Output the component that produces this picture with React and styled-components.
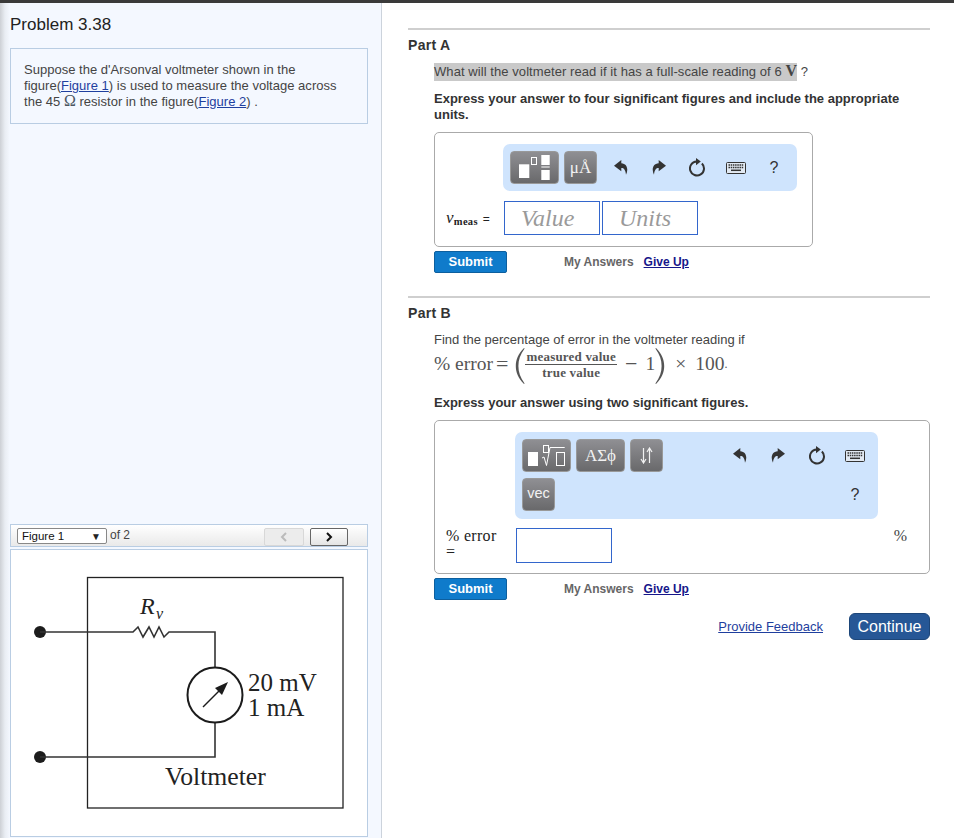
import styled, { createGlobalStyle } from "styled-components";

const GlobalStyle = createGlobalStyle`
  html, body { margin: 0; padding: 0; background: #fff; }
  body { font-family: "Liberation Sans", Arial, sans-serif; color: #333; }
  * { box-sizing: border-box; }
`;

const serif = `"Liberation Serif", "Times New Roman", serif`;

const Page = styled.div`
  width: 954px;
  height: 838px;
  overflow: hidden;
  display: flex;
  border-top: 3px solid #3a3a3a;
`;

const LeftPane = styled.aside`
  width: 382px;
  flex: none;
  padding: 0 13px 0 10px;
  border-right: 1px solid #ccd3dc;
  background: linear-gradient(to right, #cdd0d5 0, #e9edf3 5px, #f4f8ff 10px);
`;

const Title = styled.h1`
  margin: 0;
  padding-top: 12px;
  font-size: 17px;
  line-height: 20px;
  font-weight: normal;
  color: #222;
`;

const ProblemBox = styled.div`
  margin-top: 13px;
  height: 76px;
  padding: 13px 13px 0;
  border: 1px solid #b9cde3;
  font-size: 13px;
  line-height: 16px;
  letter-spacing: 0.02px;
  color: #444;
`;

const Link = styled.a`
  color: ${(p) => (p.$dark ? "#16168a" : "#1f3f9e")};
  text-decoration: underline;
  font-weight: ${(p) => (p.$bold ? "bold" : "normal")};
`;

const Omega = styled.span`
  font-family: ${serif};
  font-size: 16px;
  line-height: 0;
  color: #4a5560;
`;

const FigureBar = styled.div`
  margin-top: 400px;
  height: 23px;
  padding: 3px 19px 0 6px;
  display: flex;
  align-items: flex-start;
  border: 1px solid #b9cde3;
  background: linear-gradient(to bottom, #ffffff, #e9e9e9);
  font-size: 12px;
  color: #444;
`;

const FigureSelect = styled.div`
  width: 90px;
  height: 16px;
  padding: 0 5px 0 4px;
  display: flex;
  justify-content: space-between;
  align-items: center;
  border: 1px solid #888;
  border-radius: 2px;
  background: #fff;
  font-size: 11.5px;
  color: #111;
`;

const Caret = styled.span`
  font-size: 10px;
  color: #222;
`;

const OfLabel = styled.span`
  margin-left: 3px;
  line-height: 15px;
  flex: 1;
`;

const NavButton = styled.button`
  width: ${(p) => (p.$off ? "40px" : "38px")};
  height: 18px;
  margin-left: ${(p) => (p.$off ? "0" : "6px")};
  padding: 0;
  display: flex;
  align-items: center;
  justify-content: center;
  border: 1px solid ${(p) => (p.$off ? "#d8d8d8" : "#666")};
  border-radius: 2px;
  background: ${(p) => (p.$off ? "#ececec" : "linear-gradient(to bottom, #ffffff, #e4e4e4)")};
`;

const FigurePanel = styled.div`
  margin-top: 2px;
  height: 288px;
  border: 1px solid #b9cde3;
  background: #fff;
`;

const Circuit = styled.svg`
  display: block;
  width: 356px;
  height: 286px;
`;

const RightPane = styled.main`
  flex: 1;
  padding: 25px 24px 0 26px;
`;

const PartHeader = styled.h2`
  margin: 0;
  padding-top: 7px;
  border-top: 2px solid #cfcfcf;
  font-size: 14px;
  line-height: 16px;
  letter-spacing: 0.3px;
  font-weight: bold;
  color: #333;
`;

const PartBody = styled.section`
  margin-left: 26px;
  margin-bottom: ${(p) => p.$gap || 0}px;
`;

const Question = styled.p`
  margin: 10px 0 0;
  font-size: 13px;
  line-height: 18px;
  letter-spacing: 0.07px;
  color: #444;
`;

const Highlight = styled.span`
  display: inline-block;
  background: #c9c9c9;
`;

const BoldUnit = styled.span`
  font-family: ${serif};
  font-size: 16px;
  font-weight: bold;
  line-height: 14px;
`;

const Instruction = styled.p`
  margin: ${(p) => p.$top}px 0 0;
  font-size: 13px;
  line-height: 16px;
  font-weight: bold;
  color: #333;
`;

const AnswerBox = styled.div`
  width: ${(p) => p.$width}px;
  height: ${(p) => p.$height}px;
  margin-top: 9px;
  padding: 11px ${(p) => p.$padRight}px 0 11px;
  border: 1px solid #aaa;
  border-radius: 5px;
  background: #fff;
`;

const Toolbar = styled.div`
  width: ${(p) => p.$width}px;
  height: ${(p) => p.$height}px;
  margin-left: ${(p) => p.$indent}px;
  padding: 7px 4px 0 7px;
  display: flex;
  flex-direction: column;
  gap: 6px;
  border-radius: 7px;
  background: #cfe4fd;
`;

const ToolRow = styled.div`
  display: flex;
  justify-content: space-between;
  height: 33px;
`;

const ToolGroup = styled.div`
  display: flex;
  gap: 5px;
`;

const IconGroup = styled.div`
  display: flex;
`;

const ToolButton = styled.div`
  width: ${(p) => p.$width}px;
  height: 33px;
  padding-bottom: ${(p) => (p.$sans ? "3px" : "0")};
  display: flex;
  align-items: center;
  justify-content: center;
  border: 1px solid #999;
  border-radius: 4px;
  background: linear-gradient(to bottom, #8f8f93, #69696b);
  color: #f2f2f2;
  font-family: ${(p) => (p.$sans ? `"Liberation Sans", sans-serif` : serif)};
  font-size: ${(p) => p.$size || 17}px;
`;

const IconCell = styled.div`
  width: 38.3px;
  height: 33px;
  display: flex;
  align-items: center;
  justify-content: center;
  color: #333;
  font-size: 16px;
`;

const InputRow = styled.div`
  margin-top: ${(p) => p.$top}px;
  display: flex;
  align-items: flex-start;
`;

const VarLabel = styled.div`
  width: ${(p) => p.$width}px;
  padding-top: ${(p) => p.$top}px;
  font-family: ${serif};
  font-size: ${(p) => p.$size}px;
  line-height: 16px;
  letter-spacing: 0.3px;
  color: #222;
  flex: none;
`;

const Sub = styled.sub`
  font-size: 10.5px;
  font-style: normal;
  font-weight: bold;
  line-height: 0;
  vertical-align: -2px;
`;

const Equals = styled.span`
  margin-left: 5px;
  font-family: "Liberation Sans", sans-serif;
  font-size: 12px;
`;

const AnswerInput = styled.input`
  width: 96px;
  height: ${(p) => p.$height}px;
  margin-right: 2px;
  padding: 0 0 0 16px;
  border: 1px solid #3366cc;
  border-radius: 0;
  outline: none;
  background: #fff;
  font-family: ${serif};
  font-size: 24px;
  font-style: italic;
  &::placeholder {
    color: #9a9a9a;
    opacity: 1;
  }
`;

const UnitMark = styled.span`
  margin-left: auto;
  font-family: ${serif};
  font-size: 16px;
  line-height: 16px;
  color: #444;
`;

const ActionRow = styled.div`
  margin-top: 4px;
  display: flex;
  align-items: center;
  font-size: 12px;
  font-weight: bold;
`;

const SubmitButton = styled.button`
  width: 73px;
  height: 22px;
  padding: 0 0 2px;
  border: 1px solid #0d5f9e;
  border-radius: 2px;
  background: #0f7bcb;
  color: #fff;
  font-family: inherit;
  font-size: 13px;
  font-weight: bold;
`;

const MyAnswers = styled.span`
  margin-left: 57px;
  margin-right: 10px;
  color: #666;
`;

const Paragraph = styled.p`
  margin: 11px 0 0;
  font-size: 13px;
  line-height: 16px;
  color: #444;
`;

const Formula = styled.div`
  height: 32px;
  display: flex;
  align-items: center;
  font-family: ${serif};
  font-size: 19.5px;
  color: #555;
`;

const Delimiter = styled.svg`
  flex: none;
  align-self: flex-start;
  width: 10px;
  height: 36px;
  margin: ${(p) => p.$margin};
  transform: ${(p) => (p.$closing ? "scaleX(-1)" : "none")};
`;

const Fraction = styled.span`
  display: inline-flex;
  flex-direction: column;
  align-items: center;
  font-size: 13px;
  font-weight: bold;
  line-height: 15px;
  letter-spacing: 0.2px;
`;

const Numerator = styled.span`
  padding: 0 1px;
  border-bottom: 1px solid #555;
`;

const FormulaPart = styled.span`
  margin: ${(p) => p.$margin};
  font-size: ${(p) => (p.$size ? `${p.$size}px` : "inherit")};
`;

const FooterRow = styled.div`
  margin-top: 13px;
  display: flex;
  justify-content: flex-end;
  align-items: center;
`;

const FeedbackLink = styled(Link)`
  margin-right: 26px;
  font-size: 13px;
`;

const ContinueButton = styled.button`
  width: 81px;
  height: 27px;
  padding: 0;
  border: 1px solid #1d4679;
  border-radius: 6px;
  background: #265796;
  color: #fff;
  font-family: inherit;
  font-size: 16px;
`;

function UndoIcon({ flip }) {
  return (
    <svg width="14" height="15" viewBox="0 0 14 15" style={flip ? { transform: "scaleX(-1)" } : undefined}>
      <path d="M7.3 0 0 5.7l7.3 5.6V8c2.2-.2 4.2 1.5 4.7 6.7C14.5 10 13.5 3.5 7.3 3.2z" fill="#333" />
    </svg>
  );
}

function ResetIcon() {
  return (
    <svg width="16" height="19" viewBox="0 0 16 19">
      <path d="M12.9 5.5A7 7 0 1 1 7.5 3.5" fill="none" stroke="#333" strokeWidth="2" />
      <path d="M7 0v7.2L11.8 3.5z" fill="#333" />
    </svg>
  );
}

function KeyboardIcon() {
  return (
    <svg width="20" height="12" viewBox="0 0 20 12">
      <rect x=".5" y=".5" width="19" height="11" rx="1" fill="#e2e9f2" stroke="#333" />
      <path d="M2.5 3h15M2.5 5.5h15" stroke="#333" strokeWidth="1.3" strokeDasharray="1.5 .7" />
      <path d="M5 8.3h10" stroke="#333" strokeWidth="1.5" />
    </svg>
  );
}

function TemplateIcon() {
  return (
    <svg width="31" height="25" viewBox="0 0 31 25" fill="#fff">
      <rect x="0" y="9.3" width="10.3" height="13.7" />
      <rect x="12.5" y="2.5" width="5" height="7" fill="none" stroke="#fff" />
      <rect x="22.3" y="0" width="8.4" height="10" />
      <rect x="22.3" y="11.5" width="8.4" height="1" />
      <rect x="22.3" y="15" width="8.4" height="10" />
    </svg>
  );
}

function RadicalIcon() {
  return (
    <svg width="37" height="21" viewBox="0 0 37 21" fill="none" stroke="#fff">
      <rect x="0" y="7" width="10" height="14" fill="#fff" stroke="none" />
      <rect x="15.5" y=".5" width="5" height="7" />
      <path d="M14 13l2-1 2.5 8.5L22 2.5h14.7" />
      <rect x="28.5" y="7.5" width="8" height="13" />
    </svg>
  );
}

function SwapIcon() {
  return (
    <svg width="13" height="17" viewBox="0 0 13 17" fill="none" stroke="#f2f2f2" strokeWidth="1.2">
      <path d="M3.5 1v14M1 12l2.5 4L6 12" />
      <path d="M9.5 16V2M7 5l2.5-4L12 5" />
    </svg>
  );
}

function ChevronIcon({ left, color }) {
  return (
    <svg width="8" height="10" viewBox="0 0 8 10">
      <path d={left ? "M6 1 2 5l4 4" : "M2 1l4 4-4 4"} fill="none" stroke={color} strokeWidth="2" />
    </svg>
  );
}

function Paren({ closing, margin }) {
  return (
    <Delimiter viewBox="0 0 10 36" $closing={closing} $margin={margin}>
      <path d="M9 0C3 6 .8 12 .8 18S3 30 9 36l.6-.5C5.200 29.500 3.400 24 3.400 18S5.200 6.500 9.600.5z" fill="#555" />
    </Delimiter>
  );
}

function HistoryTools() {
  return (
    <>
      <IconCell><UndoIcon /></IconCell>
      <IconCell><UndoIcon flip /></IconCell>
      <IconCell><ResetIcon /></IconCell>
      <IconCell><KeyboardIcon /></IconCell>
    </>
  );
}

function Actions() {
  return (
    <ActionRow>
      <SubmitButton>Submit</SubmitButton>
      <MyAnswers>My Answers</MyAnswers>
      <Link $dark $bold>Give Up</Link>
    </ActionRow>
  );
}

function CircuitFigure() {
  return (
    <Circuit viewBox="11 550 356 286">
      <rect x="87.5" y="577.5" width="255.5" height="230.5" fill="none" stroke="#222" strokeWidth="1.3" />
      <circle cx="40" cy="632" r="6" fill="#1c1c1c" />
      <circle cx="40" cy="757" r="6" fill="#1c1c1c" />
      <path
        d="M40 632H133l5-5 5 10 6-10 5 10 5-10 5 10 5-5H215V667M215 723V757H40"
        fill="none"
        stroke="#333"
        strokeWidth="1.6"
      />
      <circle cx="215" cy="695" r="27.5" fill="none" stroke="#1c1c1c" strokeWidth="2" />
      <path d="M203 707 222 688" stroke="#1c1c1c" strokeWidth="1.4" />
      <path d="M228 682 222 695 215 688z" fill="#1c1c1c" />
      <g fontFamily={serif} fill="#222" fontSize="25">
        <text x="140" y="614" fontStyle="italic" fontSize="24">R</text>
        <text x="156" y="619" fontStyle="italic" fontSize="16">v</text>
        <text x="248" y="691">20 mV</text>
        <text x="248" y="716">1 mA</text>
        <text x="165" y="785" fontSize="25.7">Voltmeter</text>
      </g>
    </Circuit>
  );
}

export default function App() {
  return (
    <>
      <GlobalStyle />
      <Page>
        <LeftPane>
          <Title>Problem 3.38</Title>
          <ProblemBox>
            Suppose the d'Arsonval voltmeter shown in the
            <br />
            figure(<Link>Figure 1</Link>) is used to measure the voltage across
            <br />
            the 45 <Omega>Ω</Omega> resistor in the figure(<Link>Figure 2</Link>) .
          </ProblemBox>
          <FigureBar>
            <FigureSelect>
              Figure 1 <Caret>▼</Caret>
            </FigureSelect>
            <OfLabel>of 2</OfLabel>
            <NavButton $off aria-label="Previous figure"><ChevronIcon left color="#bbb" /></NavButton>
            <NavButton aria-label="Next figure"><ChevronIcon color="#111" /></NavButton>
          </FigureBar>
          <FigurePanel>
            <CircuitFigure />
          </FigurePanel>
        </LeftPane>

        <RightPane>
          <PartHeader>Part A</PartHeader>
          <PartBody $gap={23}>
            <Question>
              <Highlight>
                What will the voltmeter read if it has a full-scale reading of 6 <BoldUnit>V</BoldUnit>
              </Highlight>{" "}
              ?
            </Question>
            <Instruction $top={10}>
              Express your answer to four significant figures and include the appropriate units.
            </Instruction>
            <AnswerBox $width={379} $height={115} $padRight={15}>
              <Toolbar $width={294} $height={47} $indent={57}>
                <ToolRow>
                  <ToolGroup>
                    <ToolButton $width={49}><TemplateIcon /></ToolButton>
                    <ToolButton $width={33}>μÅ</ToolButton>
                  </ToolGroup>
                  <IconGroup>
                    <HistoryTools />
                    <IconCell>?</IconCell>
                  </IconGroup>
                </ToolRow>
              </Toolbar>
              <InputRow $top={10}>
                <VarLabel $width={58} $top={9} $size={17}>
                  <i>v</i><Sub>meas</Sub><Equals>=</Equals>
                </VarLabel>
                <AnswerInput $height={34} placeholder="Value" />
                <AnswerInput $height={34} placeholder="Units" />
              </InputRow>
            </AnswerBox>
            <Actions />
          </PartBody>

          <PartHeader>Part B</PartHeader>
          <PartBody>
            <Paragraph>Find the percentage of error in the voltmeter reading if</Paragraph>
            <Formula>
              <span>% error</span>
              <FormulaPart $margin="0 0 0 3px" $size={22}>=</FormulaPart>
              <Paren margin="0 0 0 7px" />
              <Fraction>
                <Numerator>measured value</Numerator>
                <span>true value</span>
              </Fraction>
              <FormulaPart $margin="0 0 0 8px" $size={22}>−</FormulaPart>
              <FormulaPart $margin="0 0 0 8px">1</FormulaPart>
              <Paren closing margin="0 0 0 0" />
              <FormulaPart $margin="0 0 0 10px">×</FormulaPart>
              <FormulaPart $margin="0 0 0 9px">100</FormulaPart>
              <FormulaPart $margin="0" $size={12}>.</FormulaPart>
            </Formula>
            <Instruction $top={15}>Express your answer using two significant figures.</Instruction>
            <AnswerBox $width={496} $height={154} $padRight={22}>
              <Toolbar $width={363} $height={87} $indent={69}>
                <ToolRow>
                  <ToolGroup>
                    <ToolButton $width={49}><RadicalIcon /></ToolButton>
                    <ToolButton $width={49}>ΑΣϕ</ToolButton>
                    <ToolButton $width={33}><SwapIcon /></ToolButton>
                  </ToolGroup>
                  <IconGroup>
                    <HistoryTools />
                  </IconGroup>
                </ToolRow>
                <ToolRow>
                  <ToolButton $width={33} $sans $size={14.5}>vec</ToolButton>
                  <IconCell>?</IconCell>
                </ToolRow>
              </Toolbar>
              <InputRow $top={9}>
                <VarLabel $width={70} $top={0} $size={16}>
                  % error
                  <br />=
                </VarLabel>
                <AnswerInput $height={35} />
                <UnitMark>%</UnitMark>
              </InputRow>
            </AnswerBox>
            <Actions />
          </PartBody>
          <FooterRow>
            <FeedbackLink>Provide Feedback</FeedbackLink>
            <ContinueButton>Continue</ContinueButton>
          </FooterRow>
        </RightPane>
      </Page>
    </>
  );
}
